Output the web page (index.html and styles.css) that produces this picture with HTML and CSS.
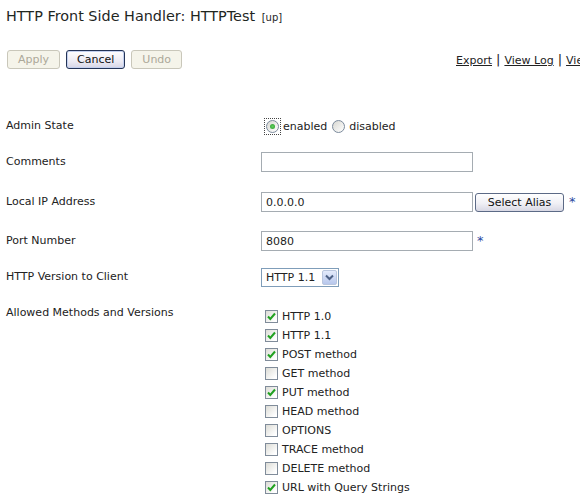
FILE: index.html
```html
<!DOCTYPE html>
<html>
<head>
<meta charset="utf-8">
<link rel="stylesheet" href="styles.css">
</head>
<body>
<div class="page">
  <h1 class="title">HTTP Front Side Handler: HTTPTest <span class="state">[up]</span></h1>

  <div class="toolbar">
    <div class="btns">
      <button class="btn disabled">Apply</button>
      <button class="btn primary">Cancel</button>
      <button class="btn disabled">Undo</button>
    </div>
    <div class="links">
      <a href="#">Export</a><span class="sep">|</span><a href="#">View Log</a><span class="sep">|</span><a href="#">View Status</a>
    </div>
  </div>

  <div class="form">
    <div class="row r-admin">
      <div class="label">Admin State</div>
      <div class="value radios">
        <span class="radio-wrap focus"><span class="radio on"></span></span><span class="rtext">enabled</span>
        <span class="radio-wrap"><span class="radio"></span></span><span class="rtext">disabled</span>
      </div>
    </div>
    <div class="row r-comments">
      <div class="label">Comments</div>
      <div class="value"><span class="input"></span></div>
    </div>
    <div class="row r-ip">
      <div class="label">Local IP Address</div>
      <div class="value"><span class="input">0.0.0.0</span><button class="btn alias">Select Alias</button><span class="req">*</span></div>
    </div>
    <div class="row r-port">
      <div class="label">Port Number</div>
      <div class="value"><span class="input">8080</span><span class="req">*</span></div>
    </div>
    <div class="row r-ver">
      <div class="label">HTTP Version to Client</div>
      <div class="value">
        <span class="select"><span class="sel-text">HTTP 1.1</span><span class="sel-btn"><svg width="9" height="7" viewBox="0 0 9 7"><path d="M1 1.5 L4.5 5 L8 1.5" fill="none" stroke="#4d6185" stroke-width="2"/></svg></span></span>
      </div>
    </div>
    <div class="row r-methods">
      <div class="label">Allowed Methods and Versions</div>
      <div class="value checks">
        <div class="check"><span class="box on"><svg width="11" height="11" viewBox="0 0 11 11"><path d="M2 5.5 L4.3 8 L9 2.5" fill="none" stroke="#21a121" stroke-width="2"/></svg></span>HTTP 1.0</div>
        <div class="check"><span class="box on"><svg width="11" height="11" viewBox="0 0 11 11"><path d="M2 5.5 L4.3 8 L9 2.5" fill="none" stroke="#21a121" stroke-width="2"/></svg></span>HTTP 1.1</div>
        <div class="check"><span class="box on"><svg width="11" height="11" viewBox="0 0 11 11"><path d="M2 5.5 L4.3 8 L9 2.5" fill="none" stroke="#21a121" stroke-width="2"/></svg></span>POST method</div>
        <div class="check"><span class="box"></span>GET method</div>
        <div class="check"><span class="box on"><svg width="11" height="11" viewBox="0 0 11 11"><path d="M2 5.5 L4.3 8 L9 2.5" fill="none" stroke="#21a121" stroke-width="2"/></svg></span>PUT method</div>
        <div class="check"><span class="box"></span>HEAD method</div>
        <div class="check"><span class="box"></span>OPTIONS</div>
        <div class="check"><span class="box"></span>TRACE method</div>
        <div class="check"><span class="box"></span>DELETE method</div>
        <div class="check"><span class="box on"><svg width="11" height="11" viewBox="0 0 11 11"><path d="M2 5.5 L4.3 8 L9 2.5" fill="none" stroke="#21a121" stroke-width="2"/></svg></span>URL with Query Strings</div>
        <div class="check"><span class="box"></span>Fragments in URL</div>
      </div>
    </div>
  </div>
</div>
</body>
</html>
```

FILE: styles.css
```css
html, body {
  margin: 0;
  padding: 0;
  background: #fff;
  overflow: hidden;
}
body {
  font-family: "DejaVu Sans", Verdana, sans-serif;
  font-size: 11px;
  color: #222;
}
.page {
  padding: 0 0 0 6px;
  width: 700px;
}
.title {
  margin: 0;
  padding-top: 8px;
  height: 17px;
  font-size: 14.4px;
  font-weight: normal;
  line-height: 17px;
  color: #1f261f;
  white-space: nowrap;
}
.state {
  font-size: 10px;
  margin-left: 2px;
}
.toolbar {
  display: grid;
  grid-template-columns: 450px auto;
  align-items: center;
  margin-top: 25px;
  height: 19px;
}
.btns {
  display: flex;
  gap: 6px;
  padding-left: 1px;
}
.btn {
  font-family: "DejaVu Sans", Verdana, sans-serif;
  font-size: 11px;
  height: 19px;
  padding: 0 10px;
  margin: 0;
  border-radius: 3px;
  line-height: 15px;
}
.btn.disabled {
  border: 1px solid #c9c7ba;
  background: #f5f4ea;
  color: #aca899;
}
.btn.primary {
  border: 1px solid #243457;
  background: linear-gradient(#ffffff, #ecebf4 60%, #d6d5e6);
  color: #111;
  padding: 0 10px;
  box-shadow: inset 0 0 0 1px #c3d0ef;
}
.links {
  white-space: nowrap;
  color: #222;
}
.links a {
  color: #222;
  text-decoration: underline;
}
.sep {
  margin: 0 4px;
  font-size: 13px;
}
.form {
  margin-top: 47px;
}
.row {
  display: grid;
  grid-template-columns: 255px auto;
  align-items: center;
  height: 20px;
}
.r-comments { margin-top: 16px; }
.r-ip { margin-top: 20px; }
.r-port { margin-top: 19px; }
.r-ver { margin-top: 16px; }
.r-methods {
  margin-top: 20px;
  align-items: start;
  height: auto;
}
.label {
  white-space: nowrap;
  position: relative;
  top: -1px;
}
.value {
  display: flex;
  align-items: center;
  white-space: nowrap;
}
.radios {
  padding-left: 3px;
}
.radio-wrap {
  display: inline-flex;
  padding: 1px;
  border: 1px dotted transparent;
}
.radio-wrap.focus {
  border-color: #444;
}
.radio {
  width: 11px;
  height: 11px;
  border: 1px solid #7b8a9c;
  border-radius: 50%;
  background: linear-gradient(135deg, #d8d8d2, #ffffff);
  display: inline-flex;
  align-items: center;
  justify-content: center;
}
.radio.on::after {
  content: "";
  width: 5px;
  height: 5px;
  border-radius: 50%;
  background: radial-gradient(#5fcf5f, #2c9a2c);
}
.rtext {
  margin: 0 3px 0 2px;
}
.input {
  box-sizing: border-box;
  display: inline-block;
  width: 212px;
  height: 20px;
  border: 1px solid #a5acb2;
  padding: 3px 0 0 4px;
  line-height: 13px;
  color: #222;
}
.btn.alias {
  margin-left: 2px;
  border: 1px solid #5c6a86;
  background: linear-gradient(#ffffff, #f0f0f5 55%, #d8d8e4);
  color: #111;
  width: 89px;
  height: 19px;
  padding: 0;
}
.req {
  color: #2a49a0;
  font-size: 13px;
  margin-left: 5px;
  position: relative;
  top: -1px;
}
.r-port .req { margin-left: 4px; }
.select {
  box-sizing: border-box;
  display: inline-flex;
  align-items: center;
  width: 78px;
  height: 19px;
  border: 1px solid #7f9db9;
  padding: 1px;
}
.sel-text {
  flex: 1;
  padding-left: 3px;
}
.sel-btn {
  width: 15px;
  height: 15px;
  box-sizing: border-box;
  border: 1px solid #b9c6de;
  background: linear-gradient(#e4ebfb, #b7c7ec);
  border-radius: 2px;
  display: inline-flex;
  align-items: center;
  justify-content: center;
}
.checks {
  flex-direction: column;
  align-items: flex-start;
  padding-left: 4px;
  padding-top: 0;
}
.check {
  display: flex;
  align-items: center;
  height: 19px;
}
.box {
  box-sizing: border-box;
  width: 13px;
  height: 13px;
  border: 1px solid #808c9a;
  background: linear-gradient(135deg, #dcdcd6, #ffffff 85%);
  margin-right: 4px;
  display: inline-flex;
  align-items: center;
  justify-content: center;
}
```
